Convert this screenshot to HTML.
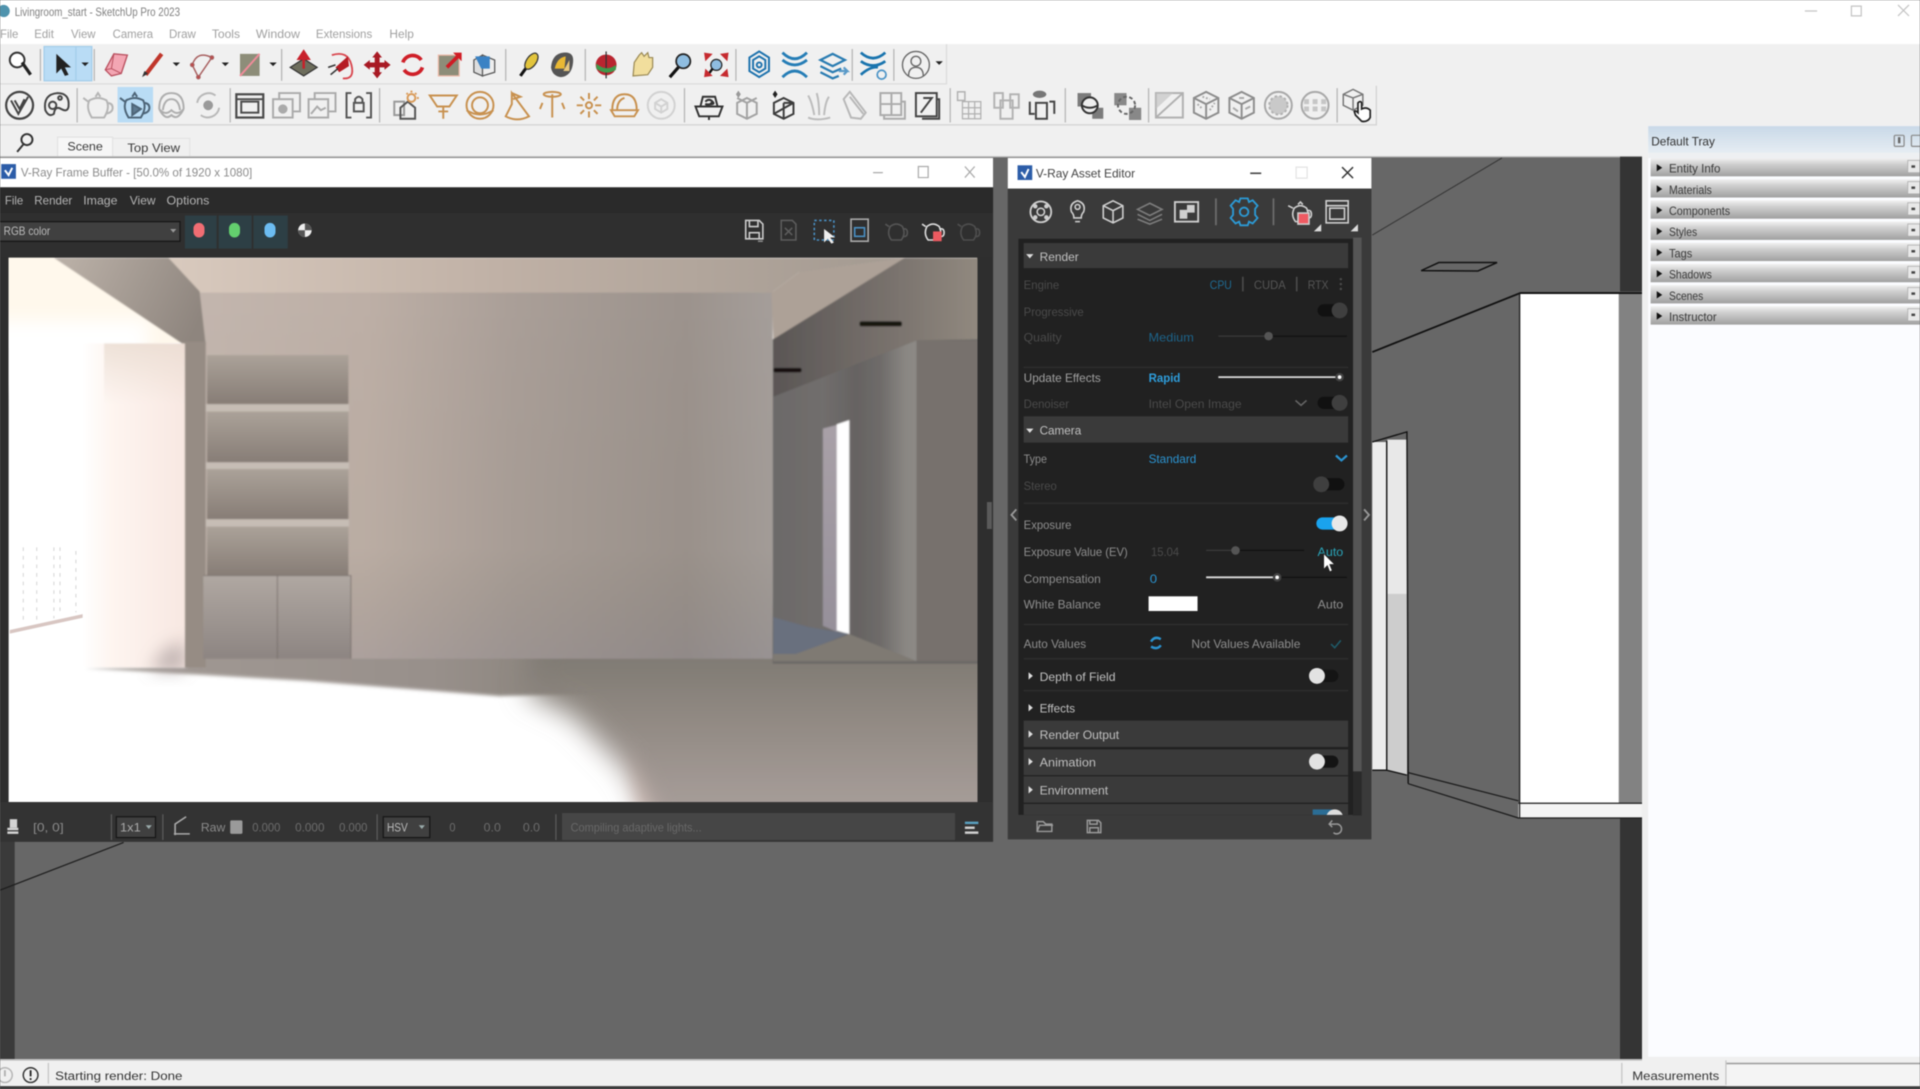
<!DOCTYPE html>
<html><head><meta charset="utf-8"><title>Livingroom_start - SketchUp Pro 2023</title>
<style>
html,body{margin:0;padding:0;width:1920px;height:1089px;overflow:hidden;background:#666}
svg{display:block;filter:blur(.55px)}
text{font-family:"Liberation Sans",sans-serif;font-size:10px}
</style></head><body>
<svg xmlns="http://www.w3.org/2000/svg" width="1920" height="1089" viewBox="0 0 1568 889.35" preserveAspectRatio="none">
<defs>
<linearGradient id="bar" x1="0" y1="0" x2="0" y2="1"><stop offset="0" stop-color="#f2f2f2"/><stop offset=".35" stop-color="#cfcfcf"/><stop offset="1" stop-color="#a0a0a0"/></linearGradient>
<linearGradient id="tray" x1="0" y1="0" x2="0" y2="1"><stop offset="0" stop-color="#c9d9e8"/><stop offset="1" stop-color="#e6edf3"/></linearGradient>
<linearGradient id="wall" gradientUnits="userSpaceOnUse" x1="160" y1="0" x2="631" y2="0"><stop offset="0" stop-color="#c3b6ae"/><stop offset=".3" stop-color="#bdafa6"/><stop offset=".55" stop-color="#aa9f98"/><stop offset=".85" stop-color="#9c938d"/><stop offset="1" stop-color="#a59e9a"/></linearGradient>
<linearGradient id="wallV" x1="0" y1="0" x2="0" y2="1"><stop offset="0" stop-color="#000" stop-opacity="0"/><stop offset=".7" stop-color="#554" stop-opacity=".03"/><stop offset="1" stop-color="#667" stop-opacity=".2"/></linearGradient>
<linearGradient id="ceil" gradientUnits="userSpaceOnUse" x1="137" y1="0" x2="739" y2="0"><stop offset="0" stop-color="#d9cabe"/><stop offset=".45" stop-color="#c0b1a6"/><stop offset="1" stop-color="#a39a91"/></linearGradient>
<linearGradient id="sof" gradientUnits="userSpaceOnUse" x1="60" y1="210" x2="165" y2="260"><stop offset="0" stop-color="#b8aea5"/><stop offset="1" stop-color="#8e857e"/></linearGradient>
<linearGradient id="lw" gradientUnits="userSpaceOnUse" x1="67" y1="0" x2="151" y2="0"><stop offset="0" stop-color="#fff"/><stop offset=".3" stop-color="#fef5f0"/><stop offset="1" stop-color="#f8e8e2"/></linearGradient>
<linearGradient id="lwT" gradientUnits="userSpaceOnUse" x1="0" y1="280" x2="0" y2="330"><stop offset="0" stop-color="#e9dbd0" stop-opacity=".75"/><stop offset="1" stop-color="#e9dbd0" stop-opacity="0"/></linearGradient>
<linearGradient id="n" x1="0" y1="0" x2="0" y2="1"><stop offset="0" stop-color="#aba299"/><stop offset="1" stop-color="#877d76"/></linearGradient>
<linearGradient id="cab" x1="0" y1="0" x2="0" y2="1"><stop offset="0" stop-color="#b0a8a2"/><stop offset="1" stop-color="#8d8582"/></linearGradient>
<linearGradient id="fl" gradientUnits="userSpaceOnUse" x1="0" y1="538" x2="0" y2="655"><stop offset="0" stop-color="#7f7a73"/><stop offset=".35" stop-color="#8e8780"/><stop offset="1" stop-color="#a69c98"/></linearGradient>
<linearGradient id="fll" gradientUnits="userSpaceOnUse" x1="160" y1="0" x2="480" y2="0"><stop offset="0" stop-color="#9f9792"/><stop offset=".6" stop-color="#98908b"/><stop offset="1" stop-color="#88827a"/></linearGradient>
<linearGradient id="rc" gradientUnits="userSpaceOnUse" x1="631" y1="0" x2="798" y2="0"><stop offset="0" stop-color="#5a5655"/><stop offset=".6" stop-color="#7a736e"/><stop offset="1" stop-color="#91897f"/></linearGradient>
<linearGradient id="rw" gradientUnits="userSpaceOnUse" x1="631" y1="0" x2="749" y2="0"><stop offset="0" stop-color="#6c6a69"/><stop offset=".35" stop-color="#716e6d"/><stop offset=".58" stop-color="#666362"/><stop offset=".75" stop-color="#6f6c6a"/><stop offset=".92" stop-color="#8a8783"/><stop offset="1" stop-color="#8d8a86"/></linearGradient>
<linearGradient id="door" x1="0" y1="0" x2="0" y2="1"><stop offset="0" stop-color="#a9a1a8"/><stop offset="1" stop-color="#96909a"/></linearGradient>
<filter id="b0" x="-5%" y="-5%" width="110%" height="110%"><feGaussianBlur stdDeviation=".7"/></filter>
<filter id="b1" x="-10%" y="-10%" width="120%" height="120%"><feGaussianBlur stdDeviation="1.3"/></filter>
<filter id="b2" x="-30%" y="-30%" width="160%" height="160%"><feGaussianBlur stdDeviation="11"/></filter>
<filter id="b3" x="-50%" y="-50%" width="200%" height="200%"><feGaussianBlur stdDeviation="7"/></filter>
<clipPath id="img"><rect x="7" y="210.5" width="791" height="444.5"/></clipPath>
<clipPath id="ae"><rect x="832" y="195" width="273" height="470.5"/></clipPath>
</defs>

<!-- Window chrome -->
<rect width="1568" height="890" fill="#f0f0f0"/>
<rect width="1568" height="36" fill="#fff"/>
<circle cx="3" cy="9" r="5" fill="#4f93ad"/>
<text x="12" y="13" textLength="135" lengthAdjust="spacingAndGlyphs" fill="#808080">Livingroom_start - SketchUp Pro 2023</text>
<g fill="#a0a0a0" font-size="10">
<text x="0" y="31" textLength="15" lengthAdjust="spacingAndGlyphs">File</text>
<text x="28" y="31" textLength="16" lengthAdjust="spacingAndGlyphs">Edit</text>
<text x="58" y="31" textLength="20" lengthAdjust="spacingAndGlyphs">View</text>
<text x="92" y="31" textLength="33" lengthAdjust="spacingAndGlyphs">Camera</text>
<text x="138" y="31" textLength="22" lengthAdjust="spacingAndGlyphs">Draw</text>
<text x="173" y="31" textLength="23" lengthAdjust="spacingAndGlyphs">Tools</text>
<text x="209" y="31" textLength="36" lengthAdjust="spacingAndGlyphs">Window</text>
<text x="258" y="31" textLength="46" lengthAdjust="spacingAndGlyphs">Extensions</text>
<text x="318" y="31" textLength="20" lengthAdjust="spacingAndGlyphs">Help</text>
</g>
<g stroke="#c4c4c4" stroke-width="1" fill="none"><path d="M1474 9h10M1512 5h8v8h-8zM1550 4l9 9M1559 4l-9 9"/></g>

<!-- Toolbars frame -->
<path d="M0 68.5H773V36" fill="none" stroke="#dcdcdc"/>
<path d="M0 102H1124V70" fill="none" stroke="#d2d2d2"/>
<rect x="36" y="38" width="39" height="28" fill="#b9dcf5" stroke="#a3cdea"/>
<path d="M62 38v28" stroke="#a3cdea"/>
<rect x="96" y="71" width="29" height="29" fill="#b9dcf5"/>
<g stroke="#b4b4b4"><path d="M33 40v26M77 40v26M230 40v26M413 40v26M478 40v26M601 40v26M696 40v26M730 40v26"/>
<path d="M63 72v28M188 72v28M310 72v28M559 72v28M776 72v28M870 72v28M938 72v28M1092 72v28"/></g>

<!-- Row 1 icons -->
<g transform="translate(16,52)"><circle cx="-2" cy="-3" r="6" fill="#fff" stroke="#333" stroke-width="1.6"/><path d="M2-1l7 10" stroke="#222" stroke-width="2.6"/></g>
<path transform="translate(51,53)" d="M-5-9V7l4-4 3 6 3-1-3-6h5z" fill="#222"/>
<path d="M66.5 51l6 0-3 3z" fill="#222"/>
<g transform="translate(95,53)"><path d="M-9 4L-2-9 9-8 4 7-4 9z" fill="#f3a6b3" stroke="#b9505f" stroke-width="1.1"/><path d="M-2-9L-4 3-9 4M-4 3L4 7" fill="none" stroke="#b9505f" stroke-width=".8"/></g>
<g transform="translate(125,53)"><path d="M-6 8L7-9" stroke="#c0362b" stroke-width="3.4"/><path d="M-9 10l2-5 3 2z" fill="#333"/></g>
<path d="M141 51h6l-3 3z M181 51h6l-3 3z M220 51h6l-3 3z M764 50h6l-3 3z" fill="#222"/>
<g transform="translate(165,53)" fill="none" stroke="#a86060" stroke-width="1.2"><path d="M-8 0Q-4-12 8-6L-3 10z"/><circle cx="-8" cy="0" r="1.3" fill="#d03a3a"/><circle cx="8" cy="-6" r="1.3" fill="#d03a3a"/><circle cx="-3" cy="10" r="1.3" fill="#d03a3a"/></g>
<g transform="translate(204,53)"><rect x="-8" y="-9" width="16" height="18" fill="#8d8d79"/><path d="M-8 9L8-9" stroke="#f08c9a" stroke-width="1.6"/></g>
<g transform="translate(248,53)"><path d="M-11 2L0-5 11 2 0 9z" fill="#6d6d5c" stroke="#333"/><path d="M0 3v-9M-4-5L0-11 4-5z" fill="#c8202a" stroke="#c8202a" stroke-width="2"/></g>
<g transform="translate(278,53)" fill="none"><path d="M-7-8Q6-12 9 0T2 11" stroke="#d9454d" stroke-width="1.5"/><path d="M-4 2L6-7 7 1-1 6z" fill="#b51c24"/><path d="M-8 8L-2 3M-10 2L-4 0" stroke="#333" stroke-width="1.3"/></g>
<path transform="translate(308,53)" d="M0-11L4-6H2V-2H6V-4L11 0 6 4V2H2V6H4L0 11-4 6H-2V2H-6V4L-11 0-6-4V-2H-2V-6H-4z" fill="#a81a24"/>
<g transform="translate(337,53)" fill="none" stroke="#cf1f28" stroke-width="3"><path d="M-8-2A8.5 8.5 0 0 1 7-4"/><path d="M8 2A8.5 8.5 0 0 1-7 4"/></g>
<g transform="translate(367,53)"><rect x="-9" y="-8" width="17" height="17" fill="#8d8d79" stroke="#eba"/><path d="M-2 2L8-8" stroke="#d01b24" stroke-width="3"/><path d="M3-10H10V-3z" fill="#d01b24"/></g>
<g transform="translate(397,53)"><path d="M-3-8L7-4V6L-3 9z" fill="#eee" stroke="#555"/><path d="M-3-8L-10-4V6L-3 9z" fill="#ddd" stroke="#555"/><path d="M-9-7H3V3H-4z" fill="#3a82c4"/></g>
<g transform="translate(431,53)"><path d="M-6 9L-1 2" stroke="#111" stroke-width="2.5"/><ellipse cx="3" cy="-3" rx="4" ry="7.5" transform="rotate(35 3 -3)" fill="#e2c43c" stroke="#333"/></g>
<g transform="translate(459,53)"><path d="M-9 2Q-8-9 1-10T9-2Q8 9-1 10-8 9-9 2z" fill="#555"/><path d="M-6 3Q-4-6 3-7L2 3z" fill="#e9b833"/><path d="M1 5Q4 0 6-4L6 5z" fill="#e8c87f"/></g>
<g transform="translate(495,53)"><circle r="8.5" fill="#b92530"/><path d="M0-11V11" stroke="#333"/><path d="M-8-1Q0 6 8 0L8 4Q0 9-8 3z" fill="#3f9a4b"/></g>
<path transform="translate(525,53)" d="M-8 9L-7-2-3-8-1-10 1-7 4-10 5-6 8-6 8 2 4 8z" fill="#f1de9d" stroke="#9b8a55"/>
<g transform="translate(555,53)"><circle cx="3" cy="-3" r="5.8" fill="#8fbde0" stroke="#222" stroke-width="1.4"/><path d="M-1 2L-8 10" stroke="#111" stroke-width="2.6"/></g>
<g transform="translate(585,53)"><circle r="4.5" fill="#8fbde0" stroke="#222"/><path d="M-3 3L-6 7" stroke="#111" stroke-width="2"/><path d="M-10-10L-3-9-9-3zM10-10L3-9 9-3zM10 10L3 9 9 3zM-10 10L-9 3-3 9z" fill="#c62a2f"/></g>
<g transform="translate(620,53)" fill="none" stroke="#1d72ad" stroke-width="1.6"><path d="M0-11L8-6V5L0 10-8 5V-6z"/><path d="M0-7L5-4V3L0 6-5 3V-4z"/><circle r="2"/></g>
<g transform="translate(649,53)" fill="none" stroke="#1976b2" stroke-width="2.3"><path d="M-10-10Q0 0 10-10M-10 10Q0 0 10 10M-10-4Q0 4 10-4" opacity=".95"/></g>
<g transform="translate(680,53)" fill="none" stroke="#2a7cb2" stroke-width="1.8"><path d="M-10-4L0-9 10-4 0 1zM-10 1L0 6 7 3M-10 6L0 11 5 9"/><path d="M5 5H12L9 2M12 5L9 8" stroke="#5a9ac8"/></g>
<g transform="translate(713,53)" fill="none" stroke="#1974ae" stroke-width="2.2"><path d="M-10-10Q0-1 10-10M-10 8Q-2 1 4 2M-10-3Q0 4 10-3"/><circle cx="7" cy="8" r="3.6" stroke="#4a93c6" stroke-width="1.4"/></g>
<g transform="translate(748,53)" fill="none" stroke="#666" stroke-width="1.1"><circle r="11"/><circle cy="-3" r="4"/><path d="M-6 9Q-6 2 0 2T6 9"/></g>

<!-- Row 2 icons -->
<g fill="none" stroke-width="1.6">
<g transform="translate(16,86)" stroke="#444"><circle r="11" stroke-width="1.8"/><path d="M-7-4L-1 7 7-7M-4-4L0 3 4-5" stroke-width="1.6"/></g>
<g transform="translate(46,86)" stroke="#444"><path d="M-9 4Q-11-9 1-10 11-10 10 1 9 6 4 3T-2 7Q-6 10-9 4z"/><circle cx="-3" cy="0" r="3"/><circle cx="3" cy="-6" r="1.5"/></g>
<g transform="translate(80,86)" stroke="#b5b5b5"><path d="M-7-4Q0-8 7-4 10 2 5 10H-5Q-10 2-7-4zM-8-3L-12-6M7-2Q12-2 12 2T6 7M-2-7L0-10 2-7"/></g>
<g transform="translate(110,86)" stroke="#4d6477"><path d="M-7-4Q0-8 7-4 10 2 5 10H-5Q-10 2-7-4zM-8-3L-12-6M7-2Q12-2 12 2T6 7M-2-7L0-10 2-7"/><path d="M-2-1L5 3-2 8z" fill="#5f7a90"/></g>
<g transform="translate(140,86)" stroke="#aeaeae"><path d="M-10 3Q-10-10 0-10T10 3M-7 4Q-6-5 0-5T7 4M-10 3Q-5 9 0 4 5 9 10 3Q5 13 0 8-5 13-10 3z"/></g>
<g transform="translate(170,86)" stroke="#b8b8b8"><path d="M-9-2A9.5 9.5 0 0 1 6-8M9 2A9.5 9.5 0 0 1-6 8"/><circle r="4" fill="#9a9a9a" stroke="none"/></g>
<g transform="translate(204,86)" stroke="#4a4a4a"><rect x="-11" y="-9" width="22" height="19" stroke-width="1.8"/><rect x="-7" y="-3" width="14" height="9"/><path d="M-11-5H11"/></g>
<g transform="translate(234,86)" stroke="#aaa"><rect x="-11" y="-5" width="16" height="15"/><path d="M-6-5V-10H11V5H5"/><circle cx="-3" cy="3" r="3" fill="#aaa"/></g>
<g transform="translate(263,86)" stroke="#aaa"><rect x="-11" y="-5" width="16" height="15"/><path d="M-6-5V-10H11V5H5M-9 7L-4 1-1 4 3 2"/></g>
<g transform="translate(293,86)" stroke="#555"><path d="M-6-10H-10V10H-6M6-10H10V10H6"/><rect x="-4" y="-2" width="8" height="7"/><path d="M-3-2V-5Q0-9 3-5V-2"/></g>
<g transform="translate(332,86)"><g stroke="#555"><rect x="-10" y="-3" width="8" height="11" stroke="#999"/><path d="M-5 10V2L1-3 7 2V11H-5z"/></g><circle cx="4" cy="-6" r="3.2" stroke="#d99a58"/><path d="M4-12V-10.5M10-6H8.5M8-10L7-9M0-10L1-9" stroke="#d99a58"/></g>
<g stroke="#c8914f"><path transform="translate(362,86)" d="M-11-8H11L5 1H-5zM0 1V11M-4 5H4"/>
<circle cx="392" cy="86" r="11"/><circle cx="392" cy="86" r="6.5"/><path d="M381 90Q392 97 403 90"/>
<path transform="translate(422,86)" d="M-4-10V-1L-9 9Q0 14 10 9zM-4-10L3-7-3-5"/>
<path transform="translate(451,86)" d="M0-9V10M-8-2L-10 3M8-2L10 3"/><ellipse cx="451" cy="77" rx="7" ry="2"/>
<g transform="translate(481,86)"><circle r="2.5"/><path d="M0-10V-5M0 5V10M-10 0H-5M5 0H10M-7-7L-4-4M4 4L7 7M7-7L4-4M-4 4L-7 7"/></g>
<path transform="translate(510,86)" d="M-10 4Q-10-9 0-9T10 4M-11 4H11L8 9H-8zM-6 4Q-6-4 0-6"/></g>
<g transform="translate(540,86)" stroke="#d2d2d2"><circle r="11"/><path d="M0-5L5-2V3L0 6-5 3V-2zM0 1V6M0 1L5-2M0 1L-5-2"/></g>
<g transform="translate(579,86)" stroke="#333"><path d="M-11 1H11L8 9H-8zM-7 1L-5-7H5L7 1M0 9V12M-3-3Q0-6 3-3T-3-1Q0 1 3-3"/></g>
<g transform="translate(610,86)" stroke="#a3a3a3"><path d="M0-6L8-2V7L0 11-8 7V-2zM0-2V11M0-2L8-6M0-2L-8-6"/><path d="M-9-9L-7-12-5-9-7-6z" fill="#999" stroke="none"/></g>
<g transform="translate(640,86)" stroke="#3c3c3c"><path d="M0-6L8-2V7L0 11-8 7V-2zM0-2V11M0-2L8-2M-8 7L8-2"/><path d="M-9-9L-7-12-5-9-7-6z" fill="#222" stroke="none"/></g>
<g transform="translate(669,86)" stroke="#bcbcbc"><path d="M-9 10Q-2 13 9 10M-4 8Q-6-3-9-8M0 8Q0-3-2-10M4 8Q5-3 8-7"/></g>
<g transform="translate(698,86)" stroke="#b8b8b8"><path d="M-9-5L-4-11 9 6 5 11-3 10zM-4-7L7 7"/></g>
<g transform="translate(728,86)" stroke="#ababab"><rect x="-9" y="-10" width="17" height="18"/><path d="M0-10V8M-9-1H8M8-3H11V11H-6V8"/></g>
<g transform="translate(757,86)" stroke="#444"><rect x="-9" y="-10" width="17" height="19"/><path d="M-5 6L4-6H-3"/><path d="M8-5H10V11H-4"/></g>
<g transform="translate(792,86)" stroke="#b0b0b0"><rect x="-10" y="-11" width="6" height="7" stroke-width="1.2"/><path d="M-6-3H9V11H-6zM-1-3V11M4-3V11M-6 2H9M-6 7H9" stroke-width="1"/></g>
<g transform="translate(822,86)" stroke="#b2b2b2"><rect x="-10" y="-10" width="7" height="12"/><rect x="-5" y="-4" width="10" height="15"/><rect x="3" y="-9" width="7" height="11"/></g>
<g transform="translate(851,86)" stroke="#444"><rect x="-5" y="-2" width="9" height="13"/><path d="M-10-3V7H-6M6-3H10V7"/><ellipse cx="-2" cy="-9" rx="5.5" ry="3" fill="#777" stroke="none"/></g>
<g transform="translate(890,86)"><rect x="-10" y="-10" width="11" height="11" fill="#7b7b7b" stroke="none"/><rect x="2" y="2" width="9" height="9" fill="#7b7b7b" stroke="none"/><circle r="6.5" fill="#eee" stroke="#333"/><path d="M-6.5 0Q0 4 6.5 0" stroke="#333"/></g>
<g transform="translate(920,86)"><rect x="-10" y="-10" width="10" height="10" fill="#888" stroke="none"/><rect x="2" y="2" width="10" height="10" fill="#888" stroke="none"/><circle r="7" stroke="#666" stroke-dasharray="3 2"/></g>
<g transform="translate(955,86)" stroke="#b0b0b0"><rect x="-11" y="-10" width="22" height="20"/><path d="M-11 10L11-10"/><path d="M-11-10H3L-11 3z" fill="#c4c4c4" stroke="none" opacity=".7"/></g>
<g transform="translate(985,86)" stroke="#8d8d8d"><path d="M0-11L10-6V6L0 11-10 6V-6zM0-1V11M0-1L10-6M0-1L-10-6"/><path d="M-7-1L-3 3M3 4L7-2M-3-7L3-5" stroke="#aaa" stroke-dasharray="1.5 1.5"/></g>
<g transform="translate(1014,86)" stroke="#8d8d8d"><path d="M0-11L10-6V6L0 11-10 6V-6zM0-1V11M0-1L10-6M0-1L-10-6"/><path d="M3 3L7 1M-7 2L-3 5M-2-6L2-6" stroke="#aaa"/></g>
<g transform="translate(1044,86)" stroke="#a8a8a8"><circle r="11"/><circle r="7.5" fill="#c9c9c9" stroke="#b0b0b0" stroke-dasharray="2 2"/></g>
<g transform="translate(1074,86)" stroke="#a8a8a8"><circle r="11"/><path d="M-9-3H9M-9 3H9" stroke-width="4" stroke="#c6c6c6" stroke-dasharray="4 3"/></g>
<g transform="translate(1105,82)" stroke="#777"><path d="M0-9L8-5V4L0 8-8 4V-5zM0-2V8M0-2L8-5M0-2L-8-5" stroke-width="1.2"/></g>
</g>
<path transform="translate(1112,90)" d="M-3-6Q-1-8 0-6V-1Q4-3 7 0V6Q5 10 0 9L-5 4-6 1Q-5 0-3 2z" fill="#fff" stroke="#222" stroke-width="1.4"/>

<!-- Search & tabs -->
<g transform="translate(20,116)" fill="none" stroke="#333" stroke-width="1.6"><circle cx="2" cy="-2" r="4.5"/><path d="M-1 2L-6 8"/></g>
<path d="M47 128V112H92V128" fill="#f6f6f6" stroke="#e2e2e2"/>
<path d="M92 128V113H155V128" fill="#f0f0f0" stroke="#e4e4e4"/>
<text x="55" y="123" textLength="29" lengthAdjust="spacingAndGlyphs" fill="#3a3a3a" font-size="10.5">Scene</text>
<text x="104" y="124" textLength="43" lengthAdjust="spacingAndGlyphs" fill="#3a3a3a" font-size="10.5">Top View</text>

<!-- Viewport -->
<rect x="0" y="128" width="1341" height="737" fill="#676767"/>
<rect x="0" y="127.5" width="1341" height="1" fill="#bbb"/>
<rect x="0" y="687" width="12" height="178" fill="#3a3a3a"/>
<path d="M101 688L0 727" stroke="#1e1e1e" stroke-width="1"/>
<rect x="1323" y="128" width="18" height="110" fill="#343434"/>
<rect x="1322" y="239" width="19" height="429" fill="#828282"/>
<rect x="1323" y="668" width="18" height="197" fill="#343434"/>
<rect x="1241.5" y="239.5" width="80.5" height="416.5" fill="#fff"/>
<rect x="1240" y="656" width="101" height="12" fill="#f4f4f4"/>
<path d="M1120.7 192L1226.6 129" stroke="#333" stroke-width=".8" fill="none"/>
<path d="M1160.6 221L1175 214.4H1222.6L1207 221.3z" fill="none" stroke="#111" stroke-width="1.2"/>
<path d="M1120.7 287.5L1241.5 239.3H1341" fill="none" stroke="#111" stroke-width="1.5"/>
<rect x="1120.7" y="361" width="11.3" height="268" fill="#ececec"/>
<path d="M1133 359H1149V633L1133 629z" fill="#e8e8e8"/>
<path d="M1133 485H1149V633L1133 629z" fill="#cdcdcd"/>
<path d="M1120.7 361L1149 352.7L1150 640M1132.5 360V629M1120.7 629H1132.5L1149 633" fill="none" stroke="#111" stroke-width="1.1"/>
<path d="M1150 631L1240 654M1150 640L1240 668H1341M1240 656H1341M1241 240V668" fill="none" stroke="#1a1a1a" stroke-width="1"/>

<!-- Frame buffer window -->
<rect x="-2" y="129" width="813" height="558" fill="#2e2e2e"/>
<rect x="-2" y="129" width="813" height="24" fill="#fff"/>
<rect x="1" y="134" width="12" height="12" fill="#2c5da8"/><path d="M4 139l3 4 3-6" fill="none" stroke="#fff" stroke-width="1.6"/>
<text x="17" y="144" textLength="189" lengthAdjust="spacingAndGlyphs" fill="#8c8c8c" font-size="10">V-Ray Frame Buffer - [50.0% of 1920 x 1080]</text>
<g stroke="#aaa" fill="none"><path d="M713 141h8M750 136h8v9h-8zM788 136l8 9M796 136l-8 9"/></g>
<rect y="153" width="811" height="21" fill="#2a2a2a"/>
<g font-size="10">
<text x="4" y="167" textLength="15" lengthAdjust="spacingAndGlyphs" fill="#b4b4b4">File</text>
<text x="28" y="167" textLength="31" lengthAdjust="spacingAndGlyphs" fill="#b4b4b4">Render</text>
<text x="68" y="167" textLength="28" lengthAdjust="spacingAndGlyphs" fill="#b4b4b4">Image</text>
<text x="106" y="167" textLength="21" lengthAdjust="spacingAndGlyphs" fill="#b4b4b4">View</text>
<text x="136" y="167" textLength="35" lengthAdjust="spacingAndGlyphs" fill="#b4b4b4">Options</text>
</g>
<rect y="174" width="811" height="36.5" fill="#2f2f2f"/>
<rect x="-1" y="181" width="148" height="16" fill="#404040" stroke="#151515"/>
<text x="3" y="192" textLength="38" lengthAdjust="spacingAndGlyphs" fill="#bbb" font-size="9.5">RGB color</text>
<path d="M139 187h5l-2.5 3z" fill="#999"/>
<g fill="#2d3f45"><rect x="151" y="176" width="26" height="27"/><rect x="178.5" y="176" width="27" height="27"/><rect x="207" y="176" width="28" height="27"/></g>
<rect x="158" y="182" width="9" height="12" rx="4.5" fill="#f06d73"/>
<rect x="187" y="182" width="9" height="12" rx="4.5" fill="#63cf6e"/>
<rect x="216" y="182" width="9" height="12" rx="4.5" fill="#6cbcf1"/>
<circle cx="249" cy="188" r="5.5" fill="#eee"/><path d="M249 188V182.5A5.5 5.5 0 0 1 254.5 188z M249 188V193.5A5.5 5.5 0 0 1 243.5 188z" fill="#555"/>
<g fill="none" stroke-width="1.3">
<g transform="translate(616,188)" stroke="#ccc"><path d="M-7-8H4L7-5V7H-7zM-4-8V-3H3V-8M-4 7V2H4V7"/><path d="M7 9H3" stroke="#888"/></g>
<g transform="translate(644,188)" stroke="#5c5c5c"><path d="M-6-8H3L6-5V8H-6zM-3-2L3 4M3-2L-3 4"/></g>
<g transform="translate(673,188)" stroke="#4a90c4" stroke-dasharray="2 2"><rect x="-8" y="-8" width="16" height="16"/></g><path d="M673 187V198L676 195 679 199 681 198 678 194H682z" fill="#eee"/>
<g transform="translate(702,188)"><rect x="-7" y="-9" width="14" height="18" stroke="#aaa"/><rect x="-4" y="-2" width="8" height="7" stroke="#4a90c4"/></g>
<g transform="translate(732,188)" stroke="#555"><path d="M-5-3Q0-7 5-3 8 3 4 8H-4Q-8 3-5-3zM-6-3L-9-5M5-1Q9-2 9 2T5 5"/></g>
<g transform="translate(762,188)" stroke="#ddd"><path d="M-5-3Q0-7 5-3 8 3 4 8H-4Q-8 3-5-3zM-6-3L-9-5M5-1Q9-2 9 2T5 5"/></g><rect x="762" y="189" width="7" height="8" fill="#ec5a60"/>
<g transform="translate(791,188)" stroke="#4e4e4e"><path d="M-5-3Q0-7 5-3 8 3 4 8H-4Q-8 3-5-3zM-6-3L-9-5M5-1Q9-2 9 2T5 5"/></g>
</g>

<!-- Rendered image -->
<g clip-path="url(#img)">
<rect x="7" y="210" width="791" height="445" fill="#fff"/>
<path d="M7 210H44L151 279.5 67.5 284H7z" fill="#fff8ec"/>
<path d="M-10 262H120V320H-10z" fill="#fff" filter="url(#b3)"/>
<g filter="url(#b0)">
<!-- floor -->
<path d="M69 545.5L151 545 163 530H500V566L408 568.5 250 556z" fill="url(#fll)" filter="url(#b1)"/>
<path d="M515 610H575V690H525z" fill="#efd8d0" filter="url(#b3)"/>
<path d="M440 500H840V710H548L512 630 468 585 430 566z" fill="url(#fl)" filter="url(#b2)"/>
<!-- back wall -->
<rect x="160" y="238" width="471" height="300" fill="url(#wall)"/>
<rect x="160" y="238" width="471" height="300" fill="url(#wallV)"/>
<path d="M137 210.5H739L653 222 630 239H163z" fill="url(#ceil)"/>
<!-- left soffit + pier + wall -->
<path d="M44 210.5H137.5L163 238 168 282H151z" fill="url(#sof)"/>
<rect x="67.5" y="280.5" width="83.5" height="264.5" fill="url(#lw)"/>
<rect x="85" y="280.5" width="66" height="50" fill="url(#lwT)"/>
<path d="M122 548H151V524L135 530z" fill="#a89c9c" filter="url(#b3)" opacity=".7"/>
<rect x="151" y="279" width="17" height="266" fill="#968c84"/>
<!-- niche -->
<rect x="169" y="290" width="115.5" height="40" fill="url(#n)"/>
<rect x="169" y="336" width="115.5" height="42" fill="url(#n)"/>
<rect x="169" y="383" width="115.5" height="41" fill="url(#n)"/>
<rect x="169" y="430" width="115.5" height="40" fill="url(#n)"/>
<g fill="#c6bdb5"><rect x="168" y="330" width="117" height="6"/><rect x="168" y="377.5" width="117" height="5.5"/><rect x="168" y="424" width="117" height="6"/></g>
<rect x="166" y="470" width="120.5" height="68" fill="url(#cab)"/>
<path d="M166 470H286.5V538M226.5 470V538" fill="none" stroke="#756c68" stroke-width=".7"/>
<!-- right side -->
<rect x="631" y="277" width="170" height="265" fill="#6b6866"/>
<path d="M739 210.5H800V277L748.6 278 631.6 324V277L653 222z" fill="url(#rc)"/>
<path d="M653 222L739 210.5 631.6 277 630 239z" fill="#ada197"/>
<path d="M631.6 324L748.6 278V540L693 518 631.6 508z" fill="url(#rw)"/>
<path d="M672 350L683.5 347V516L672 511z" fill="url(#door)"/>
<path d="M683.3 346.5L693.6 343V518L683.3 515z" fill="#fff"/>
<rect x="748.6" y="278" width="50" height="262" fill="#77716d"/>
<path d="M631.5 504L660 512 693 517.5 648 536 631.5 536z" fill="#696f7e"/>
<path d="M631.5 534H650L694 518 748.6 540H631.5z" fill="#7f7a73"/>
<rect x="702" y="262.5" width="34.5" height="4" rx="1.5" fill="#151210"/>
<rect x="631.6" y="300.5" width="23" height="3.5" rx="1.5" fill="#131110"/>
</g>
<!-- railing -->
<path d="M8 517.5L67.5 504.5V501.5L8 514.5z" fill="#d8c6c2"/>
<g stroke="#d4d4d4" stroke-width=".8" stroke-dasharray="3 4"><path d="M19 447V510M30 447V508M44 447V505M49 447V503M62 450V500"/></g>
</g>

<!-- Frame buffer bottom -->
<rect x="0" y="655" width="811" height="32.5" fill="#333"/>
<g fill="#d4d4d4"><rect x="8" y="669" width="6" height="7"/><rect x="6" y="676" width="9" height="2"/><rect x="6" y="679" width="9" height="2"/></g>
<g stroke="#5c5c5c"><path d="M91 665v21M133 665v21M308 665v21M454 665v21"/></g>
<g font-size="9.5" fill="#8a8a8a">
<text x="27" y="679" textLength="25" lengthAdjust="spacingAndGlyphs">[0, 0]</text>
<text x="164" y="679" textLength="20" lengthAdjust="spacingAndGlyphs">Raw</text>
<text x="206" y="679" textLength="23" lengthAdjust="spacingAndGlyphs" fill="#6c6c6c">0.000</text>
<text x="241" y="679" textLength="24" lengthAdjust="spacingAndGlyphs" fill="#6c6c6c">0.000</text>
<text x="277" y="679" textLength="23" lengthAdjust="spacingAndGlyphs" fill="#6c6c6c">0.000</text>
<text x="367" y="679" textLength="5" lengthAdjust="spacingAndGlyphs" fill="#6c6c6c">0</text>
<text x="395" y="679" textLength="14" lengthAdjust="spacingAndGlyphs" fill="#6c6c6c">0.0</text>
<text x="427" y="679" textLength="14" lengthAdjust="spacingAndGlyphs" fill="#6c6c6c">0.0</text>
</g>
<rect x="95" y="667" width="32" height="17" fill="#404040" stroke="#161616"/>
<text x="98" y="679" textLength="17" lengthAdjust="spacingAndGlyphs" fill="#aaa" font-size="9.5">1x1</text>
<path d="M119 674h5l-2.5 3z" fill="#9aa"/>
<path d="M142 681H155M143 682V673L152 667" fill="none" stroke="#aaa" stroke-width="1.3"/>
<rect x="188" y="670" width="10" height="11" rx="1" fill="#9a9a9a"/>
<rect x="313" y="667" width="38" height="17" fill="#404040" stroke="#161616"/>
<text x="316" y="679" textLength="17" lengthAdjust="spacingAndGlyphs" fill="#bbb" font-size="9.5">HSV</text>
<path d="M342 674h5l-2.5 3z" fill="#9aa"/>
<rect x="459" y="664" width="321" height="22" fill="#464646"/>
<text x="466" y="679" textLength="107" lengthAdjust="spacingAndGlyphs" fill="#686868" font-size="9.5">Compiling adaptive lights...</text>
<g fill="#d0d0d0"><rect x="788" y="671" width="11" height="2" fill="#5aa0c0"/><rect x="788" y="675" width="8" height="2"/><rect x="788" y="679" width="11" height="2"/></g>
<rect x="806" y="410" width="4" height="22" fill="#5a5a5a"/>

<!-- V-Ray Asset Editor -->
<rect x="823" y="129" width="297" height="556.5" fill="#3a3a3a"/>
<rect x="823" y="129" width="297" height="25" fill="#fff"/>
<rect x="831" y="135" width="12" height="12" fill="#2c5da8"/><path d="M834 140.5l3 4 3-6.5" fill="none" stroke="#fff" stroke-width="1.6"/>
<text x="846" y="145" textLength="81" lengthAdjust="spacingAndGlyphs" fill="#444" font-size="10.5">V-Ray Asset Editor</text>
<path d="M1021 141.5h9" stroke="#444" stroke-width="1.3"/>
<rect x="1058.5" y="136.5" width="9" height="9" fill="none" stroke="#e4e4e4"/>
<path d="M1096 136.5l9 9M1105 136.5l-9 9" stroke="#333" stroke-width="1.2"/>
<g fill="none" stroke="#cfcfcf" stroke-width="1.3">
<g transform="translate(850,173)"><circle r="8.5" stroke-width="1.5"/><circle r="3"/><g fill="#cfcfcf" stroke="none"><circle cx="-4.5" cy="-4.5" r="1.8"/><circle cx="4.5" cy="-4.5" r="1.8"/><circle cx="-4.5" cy="4.5" r="1.8"/><circle cx="4.5" cy="4.5" r="1.8"/></g></g>
<g transform="translate(880,172)"><path d="M-3 6Q-3 3-5 1-7-6 0-8 7-6 5 1 3 3 3 6zM-2 9H2"/><circle cy="-3" r="2"/></g>
<g transform="translate(909,173)"><path d="M0-9L8-5V5L0 9-8 5V-5zM0-1V9M0-1L8-5M0-1L-8-5"/></g>
<g transform="translate(939,173)" stroke="#7d7d7d"><path d="M0-7L10-2 0 3-10-2zM-10 2L0 7 10 2M-10 6L0 10 10 6"/></g>
<g transform="translate(969,173)"><rect x="-9.5" y="-8" width="19" height="16" stroke-width="1.5"/><rect x="-5" y="-1" width="5" height="6" fill="#cfcfcf"/><rect x="1" y="-5" width="5" height="5" fill="#cfcfcf"/></g>
<path d="M993 162V184M1040 162V184" stroke="#6a6a6a" stroke-width="1.5"/>
<g transform="translate(1016,173)" stroke="#2c9ad5" stroke-width="1.5"><path d="M-3-11H3L4-8 7-9.5 11-5 9-2.5V2.5L11 5 7 9.5 4 8 3 11H-3L-4 8-7 9.5-11 5-9 2.5V-2.5L-11-5-7-9.5-4-8z"/><circle r="3.5"/></g>
<g transform="translate(1062,173)"><path d="M-5-3Q0-7 5-3 8 3 4 8H-4Q-8 3-5-3zM-6-3L-10-5M-2-6L0-8 2-6M5-1Q9-2 9 2T5 5"/></g><rect x="1060" y="174" width="9" height="9" fill="#ef5a62"/>
<g transform="translate(1092,173)"><rect x="-9" y="-9" width="18" height="18"/><rect x="-6" y="-3" width="12" height="9"/><path d="M-9-5H9"/></g>
</g>
<path d="M1073 189h6v-6zM1103 189h6v-6z" fill="#ddd"/>

<rect x="831.7" y="195" width="274" height="470.5" fill="#212121"/>
<rect x="1105" y="194" width="7" height="436" fill="#555"/>
<rect x="1105" y="630" width="7" height="36" fill="#2a2a2a"/>
<g clip-path="url(#ae)">
<g fill="#3a3a3a"><rect x="836" y="198.5" width="265" height="20.5"/><rect x="836" y="340" width="265" height="21.5"/><rect x="836" y="588.5" width="265" height="21.5"/><rect x="836" y="612" width="265" height="21"/><rect x="836" y="634" width="265" height="21.5"/><rect x="836" y="656.6" width="265" height="12"/></g>
<g stroke="#303030"><path d="M836 300H1101M836 411H1101M836 510H1101M836 538H1101M836 564H1101"/></g>
<rect x="1072" y="661" width="16" height="6" fill="#2b6d95"/>
<circle cx="1090" cy="668" r="7" fill="#ddd"/>
</g>
<g fill="#ddd"><path d="M838 207.5h6l-3 3.5zM838 350h6l-3 3.5zM840 549l3.5 3-3.5 3zM840 575l3.5 3-3.5 3zM840 596.5l3.5 3-3.5 3zM840 619l3.5 3-3.5 3zM840 642l3.5 3-3.5 3z"/></g>
<g font-size="10.5" fill="#c0c0c0">
<text x="849" y="213" textLength="32" lengthAdjust="spacingAndGlyphs">Render</text>
<text x="849" y="355" textLength="34" lengthAdjust="spacingAndGlyphs">Camera</text>
<text x="849" y="556" textLength="62" lengthAdjust="spacingAndGlyphs">Depth of Field</text>
<text x="849" y="582" textLength="29" lengthAdjust="spacingAndGlyphs">Effects</text>
<text x="849" y="603.5" textLength="65" lengthAdjust="spacingAndGlyphs">Render Output</text>
<text x="849" y="626" textLength="46" lengthAdjust="spacingAndGlyphs">Animation</text>
<text x="849" y="649" textLength="56" lengthAdjust="spacingAndGlyphs">Environment</text>
</g>
<g font-size="10.5" fill="#4a4a4a">
<text x="836" y="236" textLength="29" lengthAdjust="spacingAndGlyphs">Engine</text>
<text x="836" y="258" textLength="49" lengthAdjust="spacingAndGlyphs">Progressive</text>
<text x="836" y="279" textLength="31" lengthAdjust="spacingAndGlyphs">Quality</text>
<text x="836" y="333" textLength="37" lengthAdjust="spacingAndGlyphs">Denoiser</text>
<text x="938" y="333" textLength="76" lengthAdjust="spacingAndGlyphs">Intel Open Image</text>
<text x="836" y="400" textLength="27" lengthAdjust="spacingAndGlyphs">Stereo</text>
<text x="940" y="454" textLength="23" lengthAdjust="spacingAndGlyphs">15.04</text>
<text x="1024" y="236" textLength="26" lengthAdjust="spacingAndGlyphs" fill="#555">CUDA</text>
<text x="1068" y="236" textLength="17" lengthAdjust="spacingAndGlyphs" fill="#555">RTX</text>
<text x="988" y="236" textLength="18" lengthAdjust="spacingAndGlyphs" fill="#1f6a92">CPU</text>
<text x="938" y="279" textLength="37" lengthAdjust="spacingAndGlyphs" fill="#1d6389">Medium</text>
</g>
<g font-size="10.5" fill="#8e8e8e">
<text x="836" y="312" textLength="63" lengthAdjust="spacingAndGlyphs" fill="#a0a0a0">Update Effects</text>
<text x="836" y="378" textLength="19" lengthAdjust="spacingAndGlyphs">Type</text>
<text x="836" y="432" textLength="39" lengthAdjust="spacingAndGlyphs">Exposure</text>
<text x="836" y="454" textLength="85" lengthAdjust="spacingAndGlyphs">Exposure Value (EV)</text>
<text x="836" y="476" textLength="63" lengthAdjust="spacingAndGlyphs">Compensation</text>
<text x="836" y="497" textLength="63" lengthAdjust="spacingAndGlyphs">White Balance</text>
<text x="836" y="529" textLength="51" lengthAdjust="spacingAndGlyphs">Auto Values</text>
<text x="973" y="529" textLength="89" lengthAdjust="spacingAndGlyphs">Not Values Available</text>
<text x="1076" y="497" textLength="21" lengthAdjust="spacingAndGlyphs">Auto</text>
<text x="938" y="312" textLength="26" lengthAdjust="spacingAndGlyphs" fill="#2e9ddb" font-weight="bold">Rapid</text>
<text x="938" y="378" textLength="39" lengthAdjust="spacingAndGlyphs" fill="#2b93d0">Standard</text>
<text x="939" y="476" textLength="6" lengthAdjust="spacingAndGlyphs" fill="#2b93d0">0</text>
<text x="1076" y="454" textLength="21" lengthAdjust="spacingAndGlyphs" fill="#2aa4b8">Auto</text>
</g>
<path d="M1015 226V238M1059 226V238" stroke="#4c4c4c" stroke-width="1.3"/>
<g fill="#4c4c4c"><circle cx="1095" cy="228" r="1"/><circle cx="1095" cy="232" r="1"/><circle cx="1095" cy="236" r="1"/></g>
<!-- toggles -->
<rect x="1076" y="248.5" width="24" height="10" rx="5" fill="#111"/><circle cx="1094" cy="253.5" r="6.5" fill="#3f3f3f"/>
<rect x="1076" y="324" width="24" height="10" rx="5" fill="#111"/><circle cx="1094" cy="329" r="6.5" fill="#3f3f3f"/>
<rect x="1074" y="390.5" width="24" height="10" rx="5" fill="#111"/><circle cx="1079" cy="395.5" r="6.5" fill="#3f3f3f"/>
<rect x="1075" y="422.5" width="25" height="10" rx="5" fill="#1aa3ee"/><circle cx="1094" cy="427.5" r="6.5" fill="#e8e8e8"/>
<rect x="1069" y="547" width="24" height="10" rx="5" fill="#141414"/><circle cx="1075.5" cy="552" r="6.5" fill="#e2e2e2"/>
<rect x="1069" y="617" width="24" height="10" rx="5" fill="#141414"/><circle cx="1075.5" cy="622" r="6.5" fill="#e2e2e2"/>
<!-- sliders -->
<path d="M995 274.5H1036" stroke="#3a3a3a"/><path d="M1036 274.5H1100" stroke="#111"/><circle cx="1036" cy="274.5" r="3.5" fill="#555"/>
<path d="M995 308H1094" stroke="#ddd" stroke-width="1.5"/><circle cx="1094" cy="308" r="3.5" fill="#444"/><circle cx="1094" cy="308" r="1.5" fill="#fff"/>
<path d="M985 449.5H1009" stroke="#3a3a3a"/><path d="M1009 449.5H1065" stroke="#111"/><circle cx="1009" cy="449.5" r="3.5" fill="#555"/>
<path d="M985 471.5H1043" stroke="#ddd" stroke-width="1.5"/><path d="M1043 471.5H1100" stroke="#111"/><circle cx="1043" cy="471.5" r="3.5" fill="#444"/><circle cx="1043" cy="471.5" r="1.5" fill="#fff"/>
<rect x="938" y="487" width="40" height="12" fill="#fff"/>
<path d="M1058 327l4.5 4 4.5-4" fill="none" stroke="#666" stroke-width="1.3"/>
<path d="M1091 372l4.5 4 4.5-4" fill="none" stroke="#2b93d0" stroke-width="1.8"/>
<path d="M1087 526l3 3 5-6" fill="none" stroke="#1f5a68" stroke-width="1.3"/>
<g fill="none" stroke="#2b93d0" stroke-width="2"><path d="M940 524Q943 519 948 522M948 527Q945 531 940 528"/></g>
<!-- side chevrons -->
<path d="M830 416l-4 4.5 4 4.5M1114 416l4 4.5-4 4.5" fill="none" stroke="#999" stroke-width="1.5"/>
<!-- footer icons -->
<g fill="none" stroke="#9a9a9a" stroke-width="1.2">
<path d="M847 679V671H852L854 673H859V679zM847 679L849 674H860"/>
<path d="M888 670H897L899 672V680H888zM890 670V673H896V670M890 680V676H897V680"/>
<path d="M1086 673H1091A4 4 0 1 1 1089 680M1088 670L1085.5 673 1088 675.5"/>
</g>
<!-- cursor -->
<path d="M1081 452V465L1084 462 1086 467 1088 466 1086 461H1090z" fill="#fff" stroke="#222" stroke-width=".6"/>

<!-- Tray -->
<rect x="1341" y="128" width="5" height="737" fill="#efefef"/>
<rect x="1346" y="103" width="222" height="760" fill="#fbfcff"/>
<rect x="1346" y="103" width="222" height="22" fill="url(#tray)"/>
<rect x="1346" y="125" width="222" height="4" fill="#eef0f2"/>
<text x="1348.5" y="119" textLength="52" lengthAdjust="spacingAndGlyphs" fill="#333" font-size="10.5">Default Tray</text>
<g fill="none" stroke="#888"><rect x="1547" y="110.5" width="8" height="9" rx="1"/><rect x="1561" y="110.5" width="8" height="9" rx="1"/></g>
<path d="M1550 112h2v5h-2z" fill="#666"/>
<g>
<rect x="1348" y="129" width="222" height="15" fill="url(#bar)"/>
<rect x="1348" y="146.3" width="222" height="15" fill="url(#bar)"/>
<rect x="1348" y="163.6" width="222" height="15" fill="url(#bar)"/>
<rect x="1348" y="180.9" width="222" height="15" fill="url(#bar)"/>
<rect x="1348" y="198.2" width="222" height="15" fill="url(#bar)"/>
<rect x="1348" y="215.5" width="222" height="15" fill="url(#bar)"/>
<rect x="1348" y="232.8" width="222" height="15" fill="url(#bar)"/>
<rect x="1348" y="250.1" width="222" height="15" fill="url(#bar)"/>
</g>
<g fill="#111"><path d="M1353 134l4.5 3-4.5 3zM1353 151.3l4.5 3-4.5 3zM1353 168.6l4.5 3-4.5 3zM1353 185.9l4.5 3-4.5 3zM1353 203.2l4.5 3-4.5 3zM1353 220.5l4.5 3-4.5 3zM1353 237.8l4.5 3-4.5 3zM1353 255.1l4.5 3-4.5 3z"/></g>
<g fill="#3a3a3a" font-size="10.5">
<text x="1363" y="141" textLength="42" lengthAdjust="spacingAndGlyphs">Entity Info</text>
<text x="1363" y="158.3" textLength="35" lengthAdjust="spacingAndGlyphs">Materials</text>
<text x="1363" y="175.6" textLength="50" lengthAdjust="spacingAndGlyphs">Components</text>
<text x="1363" y="192.9" textLength="23" lengthAdjust="spacingAndGlyphs">Styles</text>
<text x="1363" y="210.2" textLength="19" lengthAdjust="spacingAndGlyphs">Tags</text>
<text x="1363" y="227.5" textLength="35" lengthAdjust="spacingAndGlyphs">Shadows</text>
<text x="1363" y="244.8" textLength="28" lengthAdjust="spacingAndGlyphs">Scenes</text>
<text x="1363" y="262.1" textLength="39" lengthAdjust="spacingAndGlyphs">Instructor</text>
</g>
<g fill="#e8e8e8" stroke="#aaa" stroke-width=".6"><rect x="1558" y="131" width="10" height="10"/><rect x="1558" y="148.3" width="10" height="10"/><rect x="1558" y="165.6" width="10" height="10"/><rect x="1558" y="182.9" width="10" height="10"/><rect x="1558" y="200.2" width="10" height="10"/><rect x="1558" y="217.5" width="10" height="10"/><rect x="1558" y="234.8" width="10" height="10"/><rect x="1558" y="252.1" width="10" height="10"/></g>
<g fill="#444"><rect x="1561" y="135" width="3" height="2"/><rect x="1561" y="152.3" width="3" height="2"/><rect x="1561" y="169.6" width="3" height="2"/><rect x="1561" y="186.9" width="3" height="2"/><rect x="1561" y="204.2" width="3" height="2"/><rect x="1561" y="221.5" width="3" height="2"/><rect x="1561" y="238.8" width="3" height="2"/><rect x="1561" y="256.1" width="3" height="2"/></g>

<!-- Status bar -->
<rect x="0" y="865" width="1568" height="22" fill="#f0f0f0"/>
<rect x="0" y="865" width="1341" height="1.2" fill="#bdbdbd"/>
<rect x="0" y="887" width="1568" height="3" fill="#3a3a3a"/>
<rect x="1410" y="868" width="158" height="19" fill="#f4f4f4"/>
<path d="M1410 868.5H1568" stroke="#9a9a9a" stroke-width="1.2"/>
<path d="M39.5 868V885M1324.5 868V885M1409.5 866V886" stroke="#c4c4c4"/>
<circle cx="4" cy="878" r="6" fill="none" stroke="#b5b5b5" stroke-width="1.2"/><path d="M4 874V879" stroke="#b0b0b0" stroke-width="1.5"/>
<circle cx="25" cy="878" r="6" fill="none" stroke="#333" stroke-width="1.2"/><path d="M25 874V879M25 880.5V882" stroke="#222" stroke-width="1.5"/>
<text x="45" y="882" textLength="104" lengthAdjust="spacingAndGlyphs" fill="#333" font-size="10.5">Starting render: Done</text>
<text x="1333" y="882" textLength="71" lengthAdjust="spacingAndGlyphs" fill="#333" font-size="10.5">Measurements</text>
</svg>
</body></html>
